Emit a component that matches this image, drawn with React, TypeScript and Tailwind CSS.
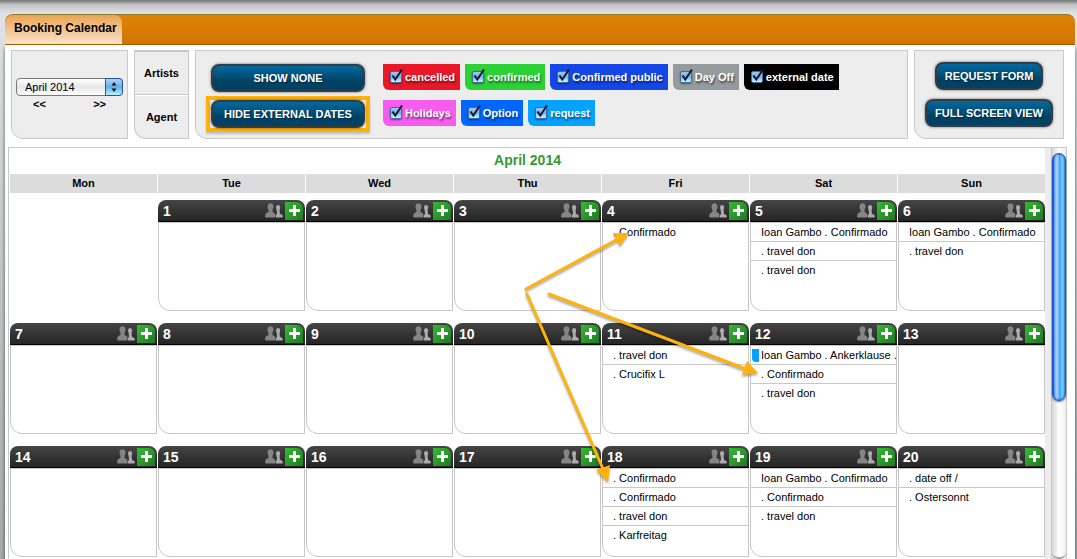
import { useState } from 'react';

interface Status {
  id: string;
  label: string;
  color: string;
}

interface CalendarEvent {
  title: string;
  marked?: boolean;
}

interface Day {
  date: number;
  events: CalendarEvent[];
}

const statusRows: Status[][] = [
  [
    { id: 'cancelled', label: 'cancelled', color: 'bg-[#e81828]' },
    { id: 'confirmed', label: 'confirmed', color: 'bg-[#2bd135]' },
    { id: 'confirmed-public', label: 'Confirmed public', color: 'bg-[#1447e6]' },
    { id: 'day-off', label: 'Day Off', color: 'bg-[#949c9d]' },
    { id: 'external', label: 'external date', color: 'bg-black' },
  ],
  [
    { id: 'holidays', label: 'Holidays', color: 'bg-[#f75cef]' },
    { id: 'option', label: 'Option', color: 'bg-[#0066ff]' },
    { id: 'request', label: 'request', color: 'bg-[#05a3ff]' },
  ],
];

const weekdays = ['Mon', 'Tue', 'Wed', 'Thu', 'Fri', 'Sat', 'Sun'];

const events: Record<number, CalendarEvent[]> = {
  4: [{ title: '. Confirmado' }],
  5: [{ title: 'Ioan Gambo . Confirmado' }, { title: '. travel don' }, { title: '. travel don' }],
  6: [{ title: 'Ioan Gambo . Confirmado' }, { title: '. travel don' }],
  11: [{ title: '. travel don' }, { title: '. Crucifix L' }],
  12: [{ title: 'Ioan Gambo . Ankerklause .', marked: true }, { title: '. Confirmado' }, { title: '. travel don' }],
  18: [{ title: '. Confirmado' }, { title: '. Confirmado' }, { title: '. travel don' }, { title: '. Karfreitag' }],
  19: [{ title: 'Ioan Gambo . Confirmado' }, { title: '. Confirmado' }, { title: '. travel don' }],
  20: [{ title: '. date off /' }, { title: '. Ostersonnt' }],
};

// April 2014 starts on a Tuesday
const days: (Day | null)[] = [
  null,
  ...Array.from({ length: 20 }, (_, i) => ({ date: i + 1, events: events[i + 1] ?? [] })),
];

function PeopleIcon() {
  return (
    <svg width="18" height="15" viewBox="0 0 18 15" aria-hidden="true">
      <path
        d="M2.500 3.500C2.500 1.500 3.800.3 5.500.3S8.500 1.500 8.500 3.500c0 1.500-.6 2.500-1 3.200v2c.4.800 2.500 1.300 3 2.500v3.300H.3v-3.300c.5-1.200 2.800-1.700 3.200-2.500v-2c-.4-.7-1-1.700-1-3.200z"
        fill="#858585"
      />
      <path
        d="M11 4.500c0-1.500.8-2.500 2.100-2.500s2.100 1 2.100 2.500c0 1-.3 1.700-.6 2.200l.3 3.800c.5.800 2.600 1 2.800 2v2h-6.700v-2.300l1-1.500-.4-4c-.3-.5-.6-1.200-.6-2.200z"
        fill="#ababab"
      />
    </svg>
  );
}

function PlusIcon() {
  return (
    <svg width="13" height="13" viewBox="0 0 13 13" aria-hidden="true">
      <path d="M5 1h3v4h4v3H8v4H5V8H1V5h4z" fill="#fff" />
    </svg>
  );
}

function StatusFilter({ status }: { status: Status }) {
  const [checked, setChecked] = useState(true);

  return (
    <label
      htmlFor={status.id}
      className={`flex h-[26px] items-center gap-[3px] rounded-bl-md pl-[7px] pr-[5px] text-[11px] leading-4 font-bold whitespace-nowrap text-white [text-shadow:1px_2px_2px_#0008] ${status.color}`}
    >
      <span className="relative block size-3">
        <input
          id={status.id}
          type="checkbox"
          checked={checked}
          onChange={() => setChecked(!checked)}
          className="block size-3 appearance-none rounded-xs border border-[#426ba3] bg-linear-to-b from-[#a3c6ef] via-[#75b3ed] to-[#c9f5ff] shadow-[0_1px_2px_#0007]"
        />
        {checked && (
          <svg className="pointer-events-none absolute -top-1 left-0" width="14" height="16" viewBox="0 0 14 16" aria-hidden="true">
            <path d="M2.500 8.500L5.300 12.500 12 2.500" fill="none" stroke="#10192c" strokeWidth="2" />
          </svg>
        )}
      </span>
      {status.label}
    </label>
  );
}

const buttonClass =
  'h-7 rounded-lg border-2 border-[#333d45] bg-linear-to-b from-[#006a9f] to-[#004164] to-65% text-[11px] leading-4 font-bold whitespace-nowrap text-white shadow-[0_0_3px_#0008] [text-shadow:1px_1px_1px_#0006]';

function DayCell({ day }: { day: Day }) {
  return (
    <div className="min-w-0">
      <div className="flex h-[22px] items-center rounded-t-lg border-b border-black bg-linear-to-b from-[#454545] to-[#252525] pr-0.5 pl-[5px]">
        <span className="flex-1 text-sm font-bold text-white">{day.date}</span>
        <button type="button" aria-label={`Guests on day ${day.date}`} className="mr-0.5">
          <PeopleIcon />
        </button>
        <button
          type="button"
          aria-label={`Add booking on day ${day.date}`}
          className="flex size-[18px] items-center justify-center rounded-tr-md bg-linear-to-br from-[#2fbd2f] to-[#267526]"
        >
          <PlusIcon />
        </button>
      </div>
      <ul className="h-[89px] overflow-hidden rounded-bl-xl border border-[#c8c8c8]">
        {day.events.map((event, i) => (
          <li
            key={i}
            className="flex h-[19px] items-center gap-0.5 border-b border-[#c8c8c8] pl-px text-[11px] leading-4 whitespace-nowrap last:border-transparent"
          >
            <span className={`h-[13px] w-[7px] shrink-0 rounded-bl-sm ${event.marked ? 'bg-[#05a3ff]' : ''}`} />
            {event.title}
          </li>
        ))}
      </ul>
    </div>
  );
}

function Arrows() {
  return (
    <svg
      className="pointer-events-none absolute top-0 left-0 drop-shadow-[0_2px_1px_#0005]"
      width="780"
      height="500"
      viewBox="0 0 780 500"
      aria-hidden="true"
    >
      <g stroke="#ffb20a" strokeWidth="3" strokeLinecap="round">
        <path d="M526 289L618 239" />
        <path d="M549 294L746 369" />
        <path d="M527 294L603 469" />
      </g>
      <g fill="#ffb20a">
        <path d="M629 233L620 246 613 233z" />
        <path d="M758 373L742 375 747 361z" />
        <path d="M608 482L596 470 610 465z" />
      </g>
    </svg>
  );
}

export default function App() {
  return (
    <div className="relative flex h-screen flex-col overflow-hidden bg-linear-to-b from-[#e2e4e7] to-[#a9abad] pr-0.5 pl-[5px] font-['Liberation_Sans',Arial,sans-serif] text-black">
      <div className="-mr-0.5 -ml-[5px] h-3.5 shrink-0 bg-linear-to-b from-[#777] via-[#c4c5c6] via-35% to-[#e2e4e7]" />

      {/* Title bar */}
      <header className="flex h-[31px] shrink-0 rounded-t-lg border-t border-b border-t-[#8d7c2c] border-b-[#a85d00] bg-linear-to-b from-[#df8305] to-[#cf7500]">
        <h1 className="flex items-center rounded-t-lg bg-linear-to-b from-[#e8a550] to-[#f8e3ca] pr-[5px] pb-1 pl-[9px] text-xs font-bold">
          Booking Calendar
        </h1>
      </header>

      <main className="flex min-h-0 flex-1 flex-col bg-white pt-[5px] shadow-[0_3px_4px_#0009]">
        {/* Toolbar */}
        <div className="flex h-[89px] shrink-0 gap-1.5 pr-[11px] pl-1.5">
          <div className="w-[117px] rounded-bl-xl border border-[#c8c8c8] bg-[#ededed] px-1 pt-[27px]">
            <div className="relative">
              <select
                aria-label="Month"
                className="block h-[18px] w-full appearance-none rounded-sm border border-[#777] bg-linear-to-b from-white via-[#e7e7e7] to-white pl-2 text-[11px] leading-4"
              >
                <option>April 2014</option>
              </select>
              <svg
                className="pointer-events-none absolute top-0 right-0 h-[18px] w-[18px] rounded-r-sm border border-[#2455a5] bg-linear-to-b from-[#b4d2f5] via-[#62aef0] to-[#b8f3ff]"
                viewBox="0 0 16 16"
                aria-hidden="true"
              >
                <path d="M8 3L10.500 6.500H5.500zM8 13L5.500 9.500H10.500z" fill="#111" />
              </svg>
            </div>
            <div className="flex justify-between px-[17px] text-[11px] leading-4 font-bold">
              <button type="button" aria-label="Previous month">&lt;&lt;</button>
              <button type="button" aria-label="Next month">&gt;&gt;</button>
            </div>
          </div>

          <nav className="flex w-[55px] flex-col overflow-hidden rounded-bl-xl border border-t-2 border-[#c8c8c8] bg-[#ededed] text-[11px] font-bold">
            <a href="#artists" className="flex flex-1 items-center justify-center border-b border-[#c8c8c8]">
              Artists
            </a>
            <a href="#agent" className="flex flex-1 items-center justify-center border-t border-white">
              Agent
            </a>
          </nav>

          <div className="flex flex-1 items-start gap-[13px] rounded-bl-xl border border-[#c8c8c8] bg-[#ededed] pt-[13px] pl-2.5">
            <div className="flex flex-col">
              <button type="button" className={`mx-[5px] ${buttonClass}`}>SHOW NONE</button>
              <div className="mt-1 border-4 border-[#ffb20a] px-px shadow-[0_2px_2px_#0003]">
                <button type="button" className={`px-[11px] ${buttonClass}`}>HIDE EXTERNAL DATES</button>
              </div>
            </div>
            <div className="flex flex-col gap-2.5">
              {statusRows.map((row, i) => (
                <div key={i} className="flex gap-[5px]">
                  {row.map((status) => (
                    <StatusFilter key={status.id} status={status} />
                  ))}
                </div>
              ))}
            </div>
          </div>

          <div className="flex w-[150px] flex-col items-center gap-[9px] rounded-bl-xl border border-[#c8c8c8] bg-[#ededed] pt-[11px]">
            <button type="button" className={`px-2 ${buttonClass}`}>REQUEST FORM</button>
            <button type="button" className={`px-2 ${buttonClass}`}>FULL SCREEN VIEW</button>
          </div>
        </div>

        {/* Calendar */}
        <div className="mt-2 mr-2 ml-[3px] flex min-h-0 flex-1 border-t border-l border-[#c8c8c8]">
          <div className="min-w-0 flex-1 overflow-hidden pl-px">
            <h2 className="h-[26px] text-center text-sm leading-6 font-bold text-[#339933]">April 2014</h2>
            <div className="grid grid-cols-7 gap-x-px">
              {weekdays.map((name) => (
                <div key={name} className="h-[19px] bg-[#dcdcdc] text-center text-[11px] leading-[19px] font-bold">
                  {name}
                </div>
              ))}
            </div>
            <div className="mt-[7px] grid grid-cols-7 gap-x-px gap-y-3">
              {days.map((day, i) => (day ? <DayCell key={i} day={day} /> : <div key={i} />))}
            </div>
          </div>
          <div className="w-1.5 bg-[#ededed]" />
          <div className="flex w-4 flex-col border-x border-[#c8c8c8] bg-linear-to-r from-[#d5d5d5] via-white to-[#eee] pt-[5px]">
            <div className="h-[61%] rounded-full border border-[#1750c8] bg-[linear-gradient(to_right,#1763df,#a9d0fa_25%,#8cc4f8_45%,#3c9ff0_50%,#6fd0ff_80%,#4aa5e8)] shadow-[inset_0_0_2px_#0038c8,0_1px_2px_#0008]" />
            <div className="mt-auto h-1.5 rounded-b-full border-b-2 border-[#a5a5a5]" />
          </div>
        </div>
      </main>

      <Arrows />
    </div>
  );
}
